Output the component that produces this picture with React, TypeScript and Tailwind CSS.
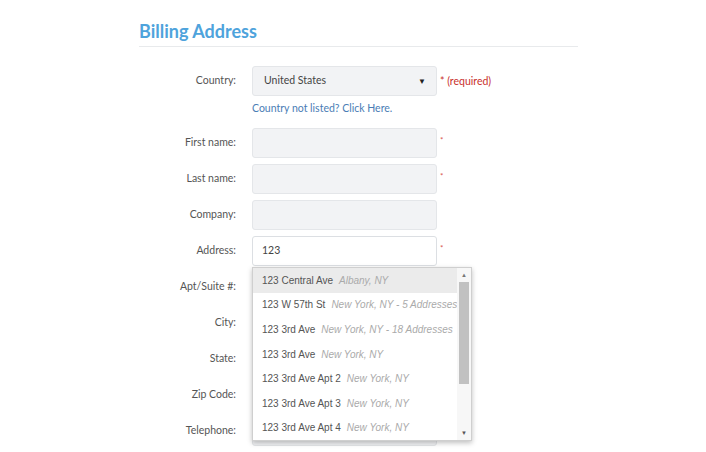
const rows = [
  { label: "First name:", required: true },
  { label: "Last name:", required: true },
  { label: "Company:", required: false },
];

const lowerRows = ["Apt/Suite #:", "City:", "State:", "Zip Code:", "Telephone:"];

const suggestions = [
  { street: "123 Central Ave", place: "Albany, NY" },
  { street: "123 W 57th St", place: "New York, NY - 5 Addresses" },
  { street: "123 3rd Ave", place: "New York, NY - 18 Addresses" },
  { street: "123 3rd Ave", place: "New York, NY" },
  { street: "123 3rd Ave Apt 2", place: "New York, NY" },
  { street: "123 3rd Ave Apt 3", place: "New York, NY" },
  { street: "123 3rd Ave Apt 4", place: "New York, NY" },
];

const Label = ({ text }: { text: string }) => (
  <div className="w-[97px] text-right text-[10.5px] text-[#555]">{text}</div>
);

const Field = () => (
  <div className="h-[30px] w-[185px] rounded-[3px] border border-[#e4e6e9] bg-[#f2f3f5]" />
);

const Star = () => <span className="ml-[3px] -mt-[6px] text-[8px] text-[#d9534f]">*</span>;

export default function App() {
  return (
    <div className="h-[452px] w-[706px] overflow-hidden bg-white font-['Lato',sans-serif]">
      <div className="ml-[139px] w-[439px] pt-[20px]">
        <h2 className="text-[18px] font-bold leading-[22px] text-[#4ea3dc]">Billing Address</h2>
        <div className="mt-[4px] h-px bg-[#e8eaec]" />

        <div className="mt-[19px] flex flex-col gap-[6px]">
          {/* country */}
          <div className="flex items-center gap-[16px]">
            <Label text="Country:" />
            <div className="flex items-start">
              <div className="flex h-[30px] w-[185px] items-center justify-between rounded-[3px] border border-[#e4e6e9] bg-[#f2f3f5] pl-[11px] pr-[10px] text-[10.5px] text-[#444]">
                <span>United States</span>
                <span className="text-[8px] text-[#222]">▼</span>
              </div>
              <span className="ml-[3px] mt-[8px] text-[10.5px] text-[#c9302c]">* (required)</span>
            </div>
          </div>
          <div className="mb-[8px] ml-[113px] text-[10.5px] leading-[12px] text-[#4a7db5]">
            Country not listed? Click Here.
          </div>

          {rows.map((r) => (
            <div key={r.label} className="flex items-center gap-[16px]">
              <Label text={r.label} />
              <div className="flex items-center">
                <Field />
                {r.required && <Star />}
              </div>
            </div>
          ))}

          {/* address with suggestions */}
          <div className="flex items-center gap-[16px]">
            <Label text="Address:" />
            <div className="relative flex items-center">
              <div className="flex h-[30px] w-[185px] items-center rounded-[3px] border border-[#dcdfe3] bg-white pl-[9px] text-[10.5px] text-[#444]">
                123
              </div>
              <Star />
              <div className="absolute left-0 top-[31px] z-10 flex h-[174px] w-[220px] border border-[#cfcfcf] bg-white shadow-[0_2px_5px_rgba(0,0,0,0.25)] font-['Liberation_Sans',Arial,sans-serif]">
                <div className="flex min-w-0 flex-1 flex-col">
                  {suggestions.map((s, i) => (
                    <div
                      key={i}
                      className={`flex h-[25px] items-center gap-[6px] overflow-hidden whitespace-nowrap pl-[9px] text-[10px] ${i === 0 ? "bg-[#ebebeb]" : ""}`}
                    >
                      <span className="text-[#555]">{s.street}</span>
                      <span className="italic text-[#aaa]">{s.place}</span>
                    </div>
                  ))}
                </div>
                <div className="flex w-[14px] flex-col items-center bg-[#f7f7f7]">
                  <div className="flex h-[14px] items-center text-[6px] text-[#777]">▲</div>
                  <div className="h-[102px] w-[10px] bg-[#c1c1c1]" />
                  <div className="flex-1" />
                  <div className="flex h-[14px] items-center text-[6px] text-[#555]">▼</div>
                </div>
              </div>
            </div>
          </div>

          {lowerRows.map((l) => (
            <div key={l} className="flex items-center gap-[16px]">
              <Label text={l} />
              <Field />
            </div>
          ))}
        </div>
      </div>
    </div>
  );
}
